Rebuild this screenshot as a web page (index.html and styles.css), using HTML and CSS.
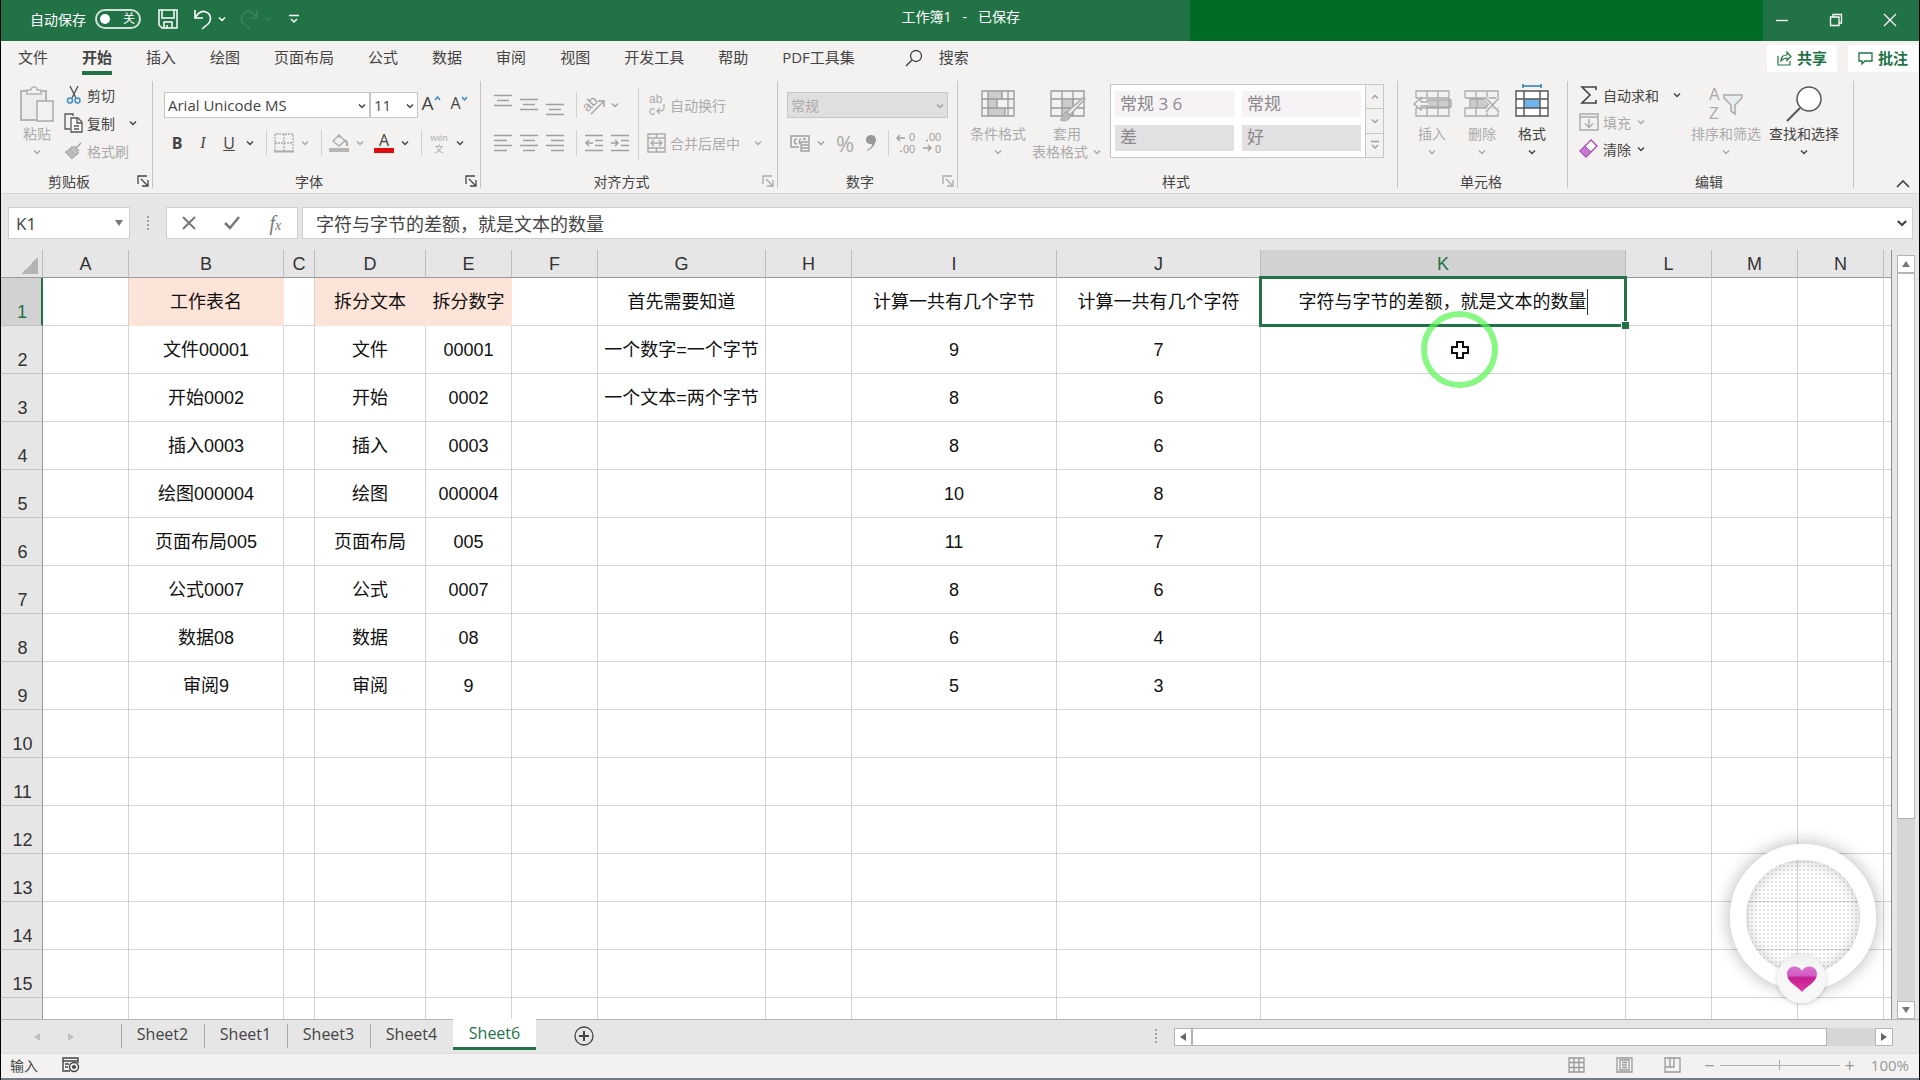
FILE: index.html
```html
<!DOCTYPE html>
<html lang="zh-CN">
<head>
    <meta charset="UTF-8">
    <title>工作簿1</title>
    <link rel="stylesheet" href="styles.css">
</head>
<body>
    <svg class="sprite" aria-hidden="true">
        <symbol id="chev" viewBox="0 0 10 10"><path d="M2 3.5l3 3 3-3" fill="none" stroke="currentColor" stroke-width="1.5"/></symbol>
        <symbol id="launcher" viewBox="0 0 12 12"><path d="M1 9V1h9M4 4l6 6M11 5v6H5" fill="none" stroke="currentColor" stroke-width="1.3"/></symbol>
        <symbol id="search" viewBox="0 0 18 18"><circle cx="11" cy="7" r="5.5" fill="none" stroke="currentColor" stroke-width="1.3"/><path d="M7 11l-6 6" stroke="currentColor" stroke-width="1.5"/></symbol>
    </svg>

    <header class="titlebar">
        <div class="title-left">
            <label class="autosave">自动保存
                <span class="switch"><input type="checkbox"><span>关</span></span>
            </label>
            <button class="quick save" aria-label="保存"><svg width="20" height="20" viewBox="0 0 20 20"><path d="M1 1h18v18H4l-3-3zM4 1v8h12V1M6 19v-6h8v6M9 19v-3" fill="none" stroke="currentColor" stroke-width="1.5"/></svg></button>
            <button class="quick" aria-label="撤消"><svg width="18" height="20" viewBox="0 0 18 20"><path d="M1 1v8h8M1 9c3-5 7-8 11-6 5 2 6 8 2 12l-6 5" fill="none" stroke="currentColor" stroke-width="1.6"/></svg></button>
            <button class="drop"><svg width="10" height="10"><use href="#chev"/></svg></button>
            <button class="quick redo" aria-label="恢复"><svg width="18" height="20" viewBox="0 0 18 20"><path d="M17 1v8H9M17 9c-3-5-7-8-11-6-5 2-6 8-2 12l6 5" fill="none" stroke="currentColor" stroke-width="1.6"/></svg></button>
            <button class="drop redo"><svg width="10" height="10"><use href="#chev"/></svg></button>
            <button class="drop more"><svg width="10" height="10" viewBox="0 0 10 10"><path d="M0 1.5h10M2 5l3 3 3-3" fill="none" stroke="currentColor" stroke-width="1.5"/></svg></button>
            <div class="doc-title"><span>工作簿1</span><span>-</span><span>已保存</span></div>
        </div>
        <div class="account"></div>
        <div class="window-buttons">
            <button aria-label="最小化"><svg width="14" height="14" viewBox="0 0 14 14"><path d="M1 7.5h12" stroke="currentColor" stroke-width="1.3"/></svg></button>
            <button aria-label="还原"><svg width="14" height="14" viewBox="0 0 14 14"><path d="M1.500 4h8.500v8.500H1.500zM4 4V1.500h8.500V10H10" fill="none" stroke="currentColor" stroke-width="1.3"/></svg></button>
            <button aria-label="关闭"><svg width="14" height="14" viewBox="0 0 14 14"><path d="M1 1l12 12M13 1L1 13" stroke="currentColor" stroke-width="1.3"/></svg></button>
        </div>
    </header>

    <nav class="tabs">
        <a href="#">文件</a>
        <a href="#" class="active">开始</a>
        <a href="#">插入</a>
        <a href="#">绘图</a>
        <a href="#">页面布局</a>
        <a href="#">公式</a>
        <a href="#">数据</a>
        <a href="#">审阅</a>
        <a href="#">视图</a>
        <a href="#">开发工具</a>
        <a href="#">帮助</a>
        <a href="#">PDF工具集</a>
        <a href="#" class="find"><svg width="18" height="18"><use href="#search"/></svg>搜索</a>
        <div class="tab-actions">
            <button><svg width="15" height="15" viewBox="0 0 15 15"><path d="M1 5v9h12v-4M4 10c0-4 2-6 6-6V1l4 4.500-4 4V7C7 7 5.500 8 4 10z" fill="none" stroke="currentColor" stroke-width="1.2"/></svg>共享</button>
            <button><svg width="15" height="15" viewBox="0 0 15 15"><path d="M1 2h13v8H7l-3 3v-3H1z" fill="none" stroke="currentColor" stroke-width="1.3"/></svg>批注</button>
        </div>
    </nav>

    <section class="ribbon">
        <div class="group">
            <div class="group-body clipboard">
                <button class="big off">
                    <svg width="34" height="36" viewBox="0 0 34 36"><path d="M1 5h25v29H1z" fill="#ededed" stroke="#b5b5b5" stroke-width="2"/><path d="M7 8V4h4c0-4 6-4 6 0h4v4z" fill="#f3f2f1" stroke="#b5b5b5" stroke-width="1.5"/><path d="M17 15h16v20H17z" fill="#f0f2f4" stroke="#aaa" stroke-width="1.5"/></svg>
                    <span>粘贴</span>
                    <svg class="chev" width="10" height="10"><use href="#chev"/></svg>
                </button>
                <div class="stack">
                    <button class="small"><svg width="19" height="20" viewBox="0 0 19 20"><path d="M6 1l6 12M14 1L8 13" stroke="#555" stroke-width="1.4"/><circle cx="6" cy="15.5" r="2.5" fill="none" stroke="#3c8dc9" stroke-width="1.5"/><circle cx="13.5" cy="15.5" r="2.5" fill="none" stroke="#3c8dc9" stroke-width="1.5"/></svg>剪切</button>
                    <button class="small"><svg width="19" height="20" viewBox="0 0 19 20"><path d="M6 16H1V1h8v2" fill="none" stroke="#555" stroke-width="1.3"/><path d="M7 5h7l4 4v10H7zM13 5v5h5M10 13h5M10 16h5" fill="#fff" stroke="#555" stroke-width="1.3"/></svg>复制<svg class="chev far" width="10" height="10"><use href="#chev"/></svg></button>
                    <button class="small off"><svg width="19" height="18" viewBox="0 0 19 18"><path d="M10 4l5 5M17 1l-5 5M8 5l6 6-2 2-6-6z" fill="#ddd" stroke="#aaa" stroke-width="1.7"/><path d="M6 7L1 10l7 7 4-4z" fill="#bbb" stroke="#aaa"/></svg>格式刷</button>
                </div>
            </div>
            <div class="group-label"><span>剪贴板</span><svg width="12" height="12"><use href="#launcher"/></svg></div>
        </div>

        <div class="group">
            <div class="group-body rows font">
                <div class="row">
                    <div class="pick font-name"><select aria-label="字体"><option>Arial Unicode MS</option></select><svg width="10" height="10"><use href="#chev"/></svg></div>
                    <div class="pick font-size"><select aria-label="字号"><option>11</option></select><svg width="10" height="10"><use href="#chev"/></svg></div>
                    <button class="tool grow">A<svg width="7" height="5" viewBox="0 0 7 5"><path d="M1 4l2.500-3L6 4" fill="none" stroke="#3c8dc9" stroke-width="1.5"/></svg></button>
                    <button class="tool shrink">A<svg width="7" height="5" viewBox="0 0 7 5"><path d="M1 1l2.500 3L6 1" fill="none" stroke="#3c8dc9" stroke-width="1.5"/></svg></button>
                </div>
                <div class="row">
                    <button class="tool"><b>B</b></button>
                    <button class="tool italic"><i>I</i></button>
                    <button class="tool"><u>U</u></button>
                    <button class="drop"><svg width="10" height="10"><use href="#chev"/></svg></button>
                    <span class="sep"></span>
                    <button class="tool off" aria-label="边框"><svg width="20" height="20" viewBox="0 0 20 20"><path d="M1 18V1h18v17M10 1v17M1 10h18" fill="none" stroke="currentColor" stroke-width="1.3" stroke-dasharray="2 1"/><path d="M0 18.5h20" stroke="currentColor" stroke-width="2"/></svg></button>
                    <button class="drop off"><svg width="10" height="10"><use href="#chev"/></svg></button>
                    <span class="sep"></span>
                    <button class="tool off" aria-label="填充颜色"><svg width="20" height="20" viewBox="0 0 20 20"><path d="M4 8l6-6 6 6-6 5zM10 5V1" fill="none" stroke="currentColor" stroke-width="1.4"/><path d="M16 7c3 2 2 5 2 6" fill="none" stroke="currentColor" stroke-width="2"/><path d="M0 15h20v4H0z" fill="#b5b5b5"/></svg></button>
                    <button class="drop off"><svg width="10" height="10"><use href="#chev"/></svg></button>
                    <button class="tool color push">A</button>
                    <button class="drop"><svg width="10" height="10"><use href="#chev"/></svg></button>
                    <span class="sep"></span>
                    <button class="tool off pinyin"><span>wén</span><span>文</span></button>
                    <button class="drop"><svg width="10" height="10"><use href="#chev"/></svg></button>
                </div>
            </div>
            <div class="group-label"><span>字体</span><svg width="12" height="12"><use href="#launcher"/></svg></div>
        </div>

        <div class="group off-all">
            <div class="group-body align">
                <div class="rows">
                    <div class="row">
                        <button class="tool" aria-label="顶端对齐"><svg width="18" height="22" viewBox="0 0 18 22"><path d="M0 1.5h18M3 6.5h12M0 11.5h18" stroke="currentColor" stroke-width="1.5"/></svg></button>
                        <button class="tool" aria-label="垂直居中"><svg width="18" height="22" viewBox="0 0 18 22"><path d="M0 5.5h18M3 10.5h12M0 15.5h18" stroke="currentColor" stroke-width="1.5"/></svg></button>
                        <button class="tool" aria-label="底端对齐"><svg width="18" height="22" viewBox="0 0 18 22"><path d="M0 10.5h18M3 15.5h12M0 20.5h18" stroke="currentColor" stroke-width="1.5"/></svg></button>
                        <span class="sep"></span>
                        <button class="tool tilt" aria-label="方向"><svg width="22" height="22" viewBox="0 0 22 22"><path d="M8 20L20 8M15 7h6v6" fill="none" stroke="currentColor" stroke-width="1.4"/><text x="-2" y="13" font-size="14" fill="currentColor" transform="rotate(-45 8 8)">ab</text></svg></button>
                        <button class="drop"><svg width="10" height="10"><use href="#chev"/></svg></button>
                    </div>
                    <div class="row">
                        <button class="tool" aria-label="左对齐"><svg width="18" height="18" viewBox="0 0 18 18"><path d="M0 1.5h18M0 6.5h13M0 11.5h18M0 16.5h13" stroke="currentColor" stroke-width="1.5"/></svg></button>
                        <button class="tool" aria-label="居中"><svg width="18" height="18" viewBox="0 0 18 18"><path d="M0 1.5h18M3 6.5h12M0 11.5h18M3 16.5h12" stroke="currentColor" stroke-width="1.5"/></svg></button>
                        <button class="tool" aria-label="右对齐"><svg width="18" height="18" viewBox="0 0 18 18"><path d="M0 1.5h18M5 6.5h13M0 11.5h18M5 16.5h13" stroke="currentColor" stroke-width="1.5"/></svg></button>
                        <span class="sep"></span>
                        <button class="tool" aria-label="减少缩进"><svg width="18" height="18" viewBox="0 0 18 18"><path d="M0 1.5h18M10 6.5h8M10 11.5h8M0 16.5h18M1 9h7M4 6L1 9l3 3" fill="none" stroke="currentColor" stroke-width="1.5"/></svg></button>
                        <button class="tool" aria-label="增加缩进"><svg width="18" height="18" viewBox="0 0 18 18"><path d="M0 1.5h18M10 6.5h8M10 11.5h8M0 16.5h18M0 9h7M4 6l3 3-3 3" fill="none" stroke="currentColor" stroke-width="1.5"/></svg></button>
                    </div>
                </div>
                <span class="sep tall"></span>
                <div class="rows">
                    <button class="small"><svg width="19" height="22" viewBox="0 0 19 22"><text x="2" y="9" font-size="12" fill="currentColor">ab</text><text x="2" y="21" font-size="12" fill="currentColor">c</text><path d="M17 10v4c0 3-2 3-7 3M13 14l-3 3 3 3" fill="none" stroke="currentColor" stroke-width="1.2"/></svg>自动换行</button>
                    <button class="small"><svg width="19" height="20" viewBox="0 0 19 20"><path d="M1 1h17v18H1zM1 5h17M1 15h17M9.500 1v4M9.500 15v4M4 10h11M7 7l-3 3 3 3M12 7l3 3-3 3" fill="none" stroke="currentColor" stroke-width="1.4"/></svg>合并后居中<svg class="chev far" width="10" height="10"><use href="#chev"/></svg></button>
                </div>
            </div>
            <div class="group-label"><span>对齐方式</span><svg width="12" height="12"><use href="#launcher"/></svg></div>
        </div>

        <div class="group off-all">
            <div class="group-body rows number">
                <div class="row">
                    <div class="pick format"><select aria-label="数字格式" disabled><option>常规</option></select><svg width="10" height="10"><use href="#chev"/></svg></div>
                </div>
                <div class="row">
                    <button class="tool" aria-label="会计数字格式"><svg width="20" height="20" viewBox="0 0 20 20"><path d="M9 14H1V3h18v5M7 6c-3-1-4 5 0 5M11 6c-2 0-2 4-1 5M13 6h3" fill="none" stroke="currentColor" stroke-width="1.5"/><path d="M11 9h8v9h-8zM11 12h8M11 15h8" fill="#f3f2f1" stroke="currentColor" stroke-width="1.3"/></svg></button>
                    <button class="drop"><svg width="10" height="10"><use href="#chev"/></svg></button>
                    <button class="tool percent push">%</button>
                    <button class="tool" aria-label="千位分隔样式"><svg width="12" height="16" viewBox="0 0 12 16"><path d="M2 15c4-2 5-4 5-6C-1 10-1 0 6 0c8 0 6 12-4 16z" fill="#999"/></svg></button>
                    <span class="sep tight"></span>
                    <button class="tool" aria-label="增加小数位数"><svg width="20" height="20" viewBox="0 0 20 20"><path d="M1 5h8M4 2L1 5l3 3M4 18.5h2" fill="none" stroke="currentColor" stroke-width="1.4"/><text x="13" y="8" font-size="11" fill="currentColor">0</text><text x="7" y="20" font-size="11" fill="currentColor">00</text></svg></button>
                    <button class="tool" aria-label="减少小数位数"><svg width="20" height="20" viewBox="0 0 20 20"><path d="M1 15h8M6 12l3 3-3 3M4 7.5h2" fill="none" stroke="currentColor" stroke-width="1.4"/><text x="7" y="8" font-size="11" fill="currentColor">00</text><text x="13" y="20" font-size="11" fill="currentColor">0</text></svg></button>
                </div>
            </div>
            <div class="group-label"><span>数字</span><svg width="12" height="12"><use href="#launcher"/></svg></div>
        </div>

        <div class="group">
            <div class="group-body styles">
                <button class="big off cond">
                    <svg width="34" height="36" viewBox="0 0 34 36"><path d="M7 5h14v8H7zM7 13h9v9H7zM7 22h17v8H7z" fill="#ccc"/><path d="M1 5h32v25H1zM1 13h32M1 22h32M7 5v25M27 5v25M21 5v8M16 13v9M24 22v8" fill="none" stroke="#999" stroke-width="1.3"/></svg>
                    <span>条件格式</span>
                    <svg class="chev" width="10" height="10"><use href="#chev"/></svg>
                </button>
                <button class="big off table">
                    <svg width="34" height="36" viewBox="0 0 34 36"><path d="M12 14h12v16H12z" fill="#ccc"/><path d="M1 5h33v25H1zM1 13h33M1 22h33M12 5v25M23 5v25" fill="none" stroke="#999" stroke-width="1.3"/><path d="M35 13L20 29l-3-3 16-14z" fill="#eee" stroke="#aaa" stroke-width="1.5"/><path d="M16 26c-4 1-3 6-6 8 5 2 10 1 10-5z" fill="#bbb" stroke="#aaa"/></svg>
                    <span>套用</span>
                    <span>表格格式<svg class="chev" width="10" height="10"><use href="#chev"/></svg></span>
                </button>
                <div class="gallery">
                    <div class="swatches">
                        <button>常规 3 6</button>
                        <button>常规</button>
                        <button class="dark">差</button>
                        <button class="dark">好</button>
                    </div>
                    <div class="gallery-nav">
                        <button aria-label="上"><svg width="10" height="10" viewBox="0 0 10 10"><path d="M2 6.5l3-3 3 3" fill="none" stroke="currentColor" stroke-width="1.5"/></svg></button>
                        <button aria-label="下"><svg width="10" height="10"><use href="#chev"/></svg></button>
                        <button aria-label="其他"><svg width="10" height="10" viewBox="0 0 10 10"><path d="M1 1.5h8M2 5l3 3 3-3" fill="none" stroke="currentColor" stroke-width="1.5"/></svg></button>
                    </div>
                </div>
            </div>
            <div class="group-label plain"><span>样式</span></div>
        </div>

        <div class="group">
            <div class="group-body cells">
                <button class="big off">
                    <svg width="40" height="36" viewBox="0 0 40 36"><path d="M14 14h25v7H14z" fill="#ccc"/><path d="M4 12V5h33v25H4v-8M4 12h33M4 22h33M15 5v7M26 5v7M15 22v8M26 22v8M15 14h24v7H15M26 14v7" fill="none" stroke="#aaa" stroke-width="1.3"/><path d="M16 16H9v-4l-7 6 7 6v-4h7" fill="#f3f2f1" stroke="#aaa" stroke-width="1.3"/></svg>
                    <span>插入</span>
                    <svg class="chev" width="10" height="10"><use href="#chev"/></svg>
                </button>
                <button class="big off">
                    <svg width="36" height="36" viewBox="0 0 36 36"><path d="M6 13h15l4 5-4 4H6z" fill="#ccc"/><path d="M1 12V5h33v7H1M1 22v8h33v-8zM12 5v7M23 5v7M12 22v8M23 22v8M6 13h15l4 5-4 4H6zM13 13v9" fill="none" stroke="#aaa" stroke-width="1.3"/><path d="M22 12l13 14M35 12L22 26" stroke="#f3f2f1" stroke-width="4"/><path d="M22 12l13 14M35 12L22 26" stroke="#aaa" stroke-width="1.3"/></svg>
                    <span>删除</span>
                    <svg class="chev" width="10" height="10"><use href="#chev"/></svg>
                </button>
                <button class="big">
                    <svg width="34" height="36" viewBox="0 0 34 36"><path d="M1 5h32v25H1z" fill="#fff"/><path d="M9 13h16v9H9z" fill="#6fb4e8"/><path d="M1 5h32v25H1zM1 13h32M1 22h32M9 5v25M25 5v25" fill="none" stroke="#555" stroke-width="1.4"/><path d="M8 0h18M8-2v4M26-2v4" stroke="#2a7fc0" stroke-width="1.5"/></svg>
                    <span>格式</span>
                    <svg class="chev" width="10" height="10"><use href="#chev"/></svg>
                </button>
            </div>
            <div class="group-label plain"><span>单元格</span></div>
        </div>

        <div class="group">
            <div class="group-body edit">
                <div class="stack">
                    <button class="small"><svg width="20" height="20" viewBox="0 0 20 20"><path d="M17 5V2H3l8 8-8 8h14v-3" fill="none" stroke="#444" stroke-width="1.6"/></svg>自动求和<svg class="chev far" width="10" height="10"><use href="#chev"/></svg></button>
                    <button class="small off"><svg width="20" height="18" viewBox="0 0 20 18"><path d="M1 1h18v16H1zM1 4h18M10 6v8M6 10.5l4 4 4-4" fill="none" stroke="#aaa" stroke-width="1.4"/></svg>填充<svg class="chev" width="10" height="10"><use href="#chev"/></svg></button>
                    <button class="small"><svg width="20" height="20" viewBox="0 0 20 20"><path d="M12 1l6 6L7 18l-6-6z" fill="#fff" stroke="#a84bb5" stroke-width="1.4"/><path d="M6 7l6 6-5 5-6-6z" fill="#c877d2" stroke="#a84bb5"/></svg>清除<svg class="chev" width="10" height="10"><use href="#chev"/></svg></button>
                </div>
                <button class="big off wide">
                    <svg width="36" height="36" viewBox="0 0 36 36"><text x="1" y="14" font-size="16" fill="currentColor">A</text><text x="1" y="33" font-size="16" fill="currentColor">Z</text><path d="M16 9h18v3l-7 7v9l-4-3v-6l-7-7z" fill="#e9edf0" stroke="#aaa" stroke-width="1.5"/></svg>
                    <span>排序和筛选</span>
                    <svg class="chev" width="10" height="10"><use href="#chev"/></svg>
                </button>
                <button class="big wide">
                    <svg width="36" height="36" viewBox="0 0 36 36"><circle cx="23" cy="13" r="12" fill="#fff" stroke="#555" stroke-width="1.5"/><path d="M14 22L1 35" stroke="#555" stroke-width="2"/></svg>
                    <span>查找和选择</span>
                    <svg class="chev" width="10" height="10"><use href="#chev"/></svg>
                </button>
            </div>
            <div class="group-label plain"><span>编辑</span></div>
        </div>
        <button class="collapse" aria-label="折叠功能区"><svg width="14" height="9" viewBox="0 0 14 9"><path d="M1 8l6-6 6 6" fill="none" stroke="currentColor" stroke-width="1.7"/></svg></button>
    </section>

    <section class="formula-bar">
        <div class="name-box"><input type="text" value="K1" aria-label="名称框"><span class="tri down"></span></div>
        <span class="dots"></span>
        <div class="formula-buttons">
            <button aria-label="取消"><svg width="14" height="14" viewBox="0 0 14 14"><path d="M1 1l12 12M13 1L1 13" stroke="currentColor" stroke-width="2"/></svg></button>
            <button aria-label="输入"><svg width="16" height="14" viewBox="0 0 16 14"><path d="M1 7l5 5 9-11" fill="none" stroke="currentColor" stroke-width="2.5"/></svg></button>
            <button class="fx"><i>f<small>x</small></i></button>
        </div>
        <div class="formula">
            <input type="text" value="字符与字节的差额，就是文本的数量" aria-label="编辑栏">
            <svg width="14" height="14"><use href="#chev"/></svg>
        </div>
    </section>

    <main class="sheet">
        <div class="grid">
            <table>
                <colgroup>
                    <col class="c-head"><col class="c-std"><col class="c-b"><col class="c-c"><col class="c-d"><col class="c-std"><col class="c-std"><col class="c-g"><col class="c-std"><col class="c-i"><col class="c-j"><col class="c-k"><col class="c-std"><col class="c-std"><col class="c-std"><col class="c-rest">
                </colgroup>
                <thead>
                    <tr><th class="corner"></th><th>A</th><th>B</th><th>C</th><th>D</th><th>E</th><th>F</th><th>G</th><th>H</th><th>I</th><th>J</th><th class="current">K</th><th>L</th><th>M</th><th>N</th><th></th></tr>
                </thead>
                <tbody>
                    <tr><th class="current">1</th><td></td><td class="fill">工作表名</td><td></td><td class="fill">拆分文本</td><td class="fill">拆分数字</td><td></td><td>首先需要知道</td><td></td><td>计算一共有几个字节</td><td>计算一共有几个字符</td><td class="selected"><span class="caret">字符与字节的差额，就是文本的数量</span></td><td></td><td></td><td></td><td></td></tr>
                    <tr><th>2</th><td></td><td>文件00001</td><td></td><td>文件</td><td>00001</td><td></td><td>一个数字=一个字节</td><td></td><td>9</td><td>7</td><td></td><td></td><td></td><td></td><td></td></tr>
                    <tr><th>3</th><td></td><td>开始0002</td><td></td><td>开始</td><td>0002</td><td></td><td>一个文本=两个字节</td><td></td><td>8</td><td>6</td><td></td><td></td><td></td><td></td><td></td></tr>
                    <tr><th>4</th><td></td><td>插入0003</td><td></td><td>插入</td><td>0003</td><td></td><td></td><td></td><td>8</td><td>6</td><td></td><td></td><td></td><td></td><td></td></tr>
                    <tr><th>5</th><td></td><td>绘图000004</td><td></td><td>绘图</td><td>000004</td><td></td><td></td><td></td><td>10</td><td>8</td><td></td><td></td><td></td><td></td><td></td></tr>
                    <tr><th>6</th><td></td><td>页面布局005</td><td></td><td>页面布局</td><td>005</td><td></td><td></td><td></td><td>11</td><td>7</td><td></td><td></td><td></td><td></td><td></td></tr>
                    <tr><th>7</th><td></td><td>公式0007</td><td></td><td>公式</td><td>0007</td><td></td><td></td><td></td><td>8</td><td>6</td><td></td><td></td><td></td><td></td><td></td></tr>
                    <tr><th>8</th><td></td><td>数据08</td><td></td><td>数据</td><td>08</td><td></td><td></td><td></td><td>6</td><td>4</td><td></td><td></td><td></td><td></td><td></td></tr>
                    <tr><th>9</th><td></td><td>审阅9</td><td></td><td>审阅</td><td>9</td><td></td><td></td><td></td><td>5</td><td>3</td><td></td><td></td><td></td><td></td><td></td></tr>
                    <tr><th>10</th><td></td><td></td><td></td><td></td><td></td><td></td><td></td><td></td><td></td><td></td><td></td><td></td><td></td><td></td><td></td></tr>
                    <tr><th>11</th><td></td><td></td><td></td><td></td><td></td><td></td><td></td><td></td><td></td><td></td><td></td><td></td><td></td><td></td><td></td></tr>
                    <tr><th>12</th><td></td><td></td><td></td><td></td><td></td><td></td><td></td><td></td><td></td><td></td><td></td><td></td><td></td><td></td><td></td></tr>
                    <tr><th>13</th><td></td><td></td><td></td><td></td><td></td><td></td><td></td><td></td><td></td><td></td><td></td><td></td><td></td><td></td><td></td></tr>
                    <tr><th>14</th><td></td><td></td><td></td><td></td><td></td><td></td><td></td><td></td><td></td><td></td><td></td><td></td><td></td><td></td><td></td></tr>
                    <tr><th>15</th><td></td><td></td><td></td><td></td><td></td><td></td><td></td><td></td><td></td><td></td><td></td><td></td><td></td><td></td><td></td></tr>
                    <tr><th></th><td></td><td></td><td></td><td></td><td></td><td></td><td></td><td></td><td></td><td></td><td></td><td></td><td></td><td></td><td></td></tr>
                </tbody>
            </table>
        </div>
        <div class="vscroll">
            <button aria-label="向上滚动"><span class="tri up"></span></button>
            <div class="track"><div class="thumb"></div></div>
            <button aria-label="向下滚动"><span class="tri down"></span></button>
        </div>
    </main>

    <footer class="sheet-tabs">
        <div class="tab-nav"><span class="tri left"></span><span class="tri right"></span></div>
        <button>Sheet2</button>
        <button>Sheet1</button>
        <button>Sheet3</button>
        <button>Sheet4</button>
        <button class="active">Sheet6</button>
        <button class="add" aria-label="新工作表"><svg width="20" height="20" viewBox="0 0 20 20"><circle cx="10" cy="10" r="9" fill="none" stroke="currentColor" stroke-width="1.3"/><path d="M10 5v10M5 10h10" stroke="currentColor" stroke-width="2"/></svg></button>
        <span class="dots"></span>
        <div class="hscroll">
            <button aria-label="向左滚动"><span class="tri left"></span></button>
            <div class="track"><div class="thumb"></div></div>
            <button aria-label="向右滚动"><span class="tri right"></span></button>
        </div>
    </footer>

    <div class="status">
        <span>输入</span>
        <svg width="18" height="16" viewBox="0 0 18 16"><path d="M8 14H1V1h15v5M1 4h15M3 7h4M3 10h3" fill="none" stroke="currentColor" stroke-width="1.4"/><circle cx="12" cy="10" r="4.5" fill="#f3f2f1" stroke="currentColor" stroke-width="1.4"/><circle cx="12" cy="10" r="2" fill="currentColor"/></svg>
        <div class="views">
            <button aria-label="普通"><svg width="18" height="16" viewBox="0 0 18 16"><path d="M1 1h15v14H1zM1 5.5h15M1 10.5h15M6 1v14M11 1v14" fill="none" stroke="currentColor" stroke-width="1.3"/></svg></button>
            <button aria-label="页面布局"><svg width="18" height="16" viewBox="0 0 18 16"><path d="M1 1h15v14H1zM4 3h9v10H4zM6 5.5h5M6 8h5M6 10.5h5" fill="none" stroke="currentColor" stroke-width="1.3"/></svg></button>
            <button aria-label="分页预览"><svg width="18" height="16" viewBox="0 0 18 16"><path d="M1 1h15v14H1zM1 10h9V1M6 1v9" fill="none" stroke="currentColor" stroke-width="1.3"/></svg></button>
        </div>
        <div class="zoom">
            <span>−</span>
            <input type="range" min="0" max="100" value="50" aria-label="缩放">
            <span>+</span>
        </div>
        <span class="percent-label">100%</span>
    </div>

    <div class="pointer"><svg width="20" height="20" viewBox="0 0 20 20"><path d="M7 2h6v5h5v6h-5v5H7v-5H2V7h5z" fill="#fff" stroke="#111" stroke-width="2"/></svg></div>
    <div class="dial">
        <div class="dial-face"></div>
        <div class="badge"><svg width="30" height="26" viewBox="0 0 30 26"><defs><linearGradient id="pink" x1="0" y1="0" x2="0" y2="1"><stop offset="0" stop-color="#d873cc"/><stop offset=".35" stop-color="#d25cc4"/><stop offset=".45" stop-color="#c41d90"/><stop offset="1" stop-color="#de3da5"/></linearGradient></defs><path d="M15 26C10 20 0 16 0 8c0-9 12-10 15-3 3-7 15-6 15 3 0 8-10 12-15 18z" fill="url(#pink)"/></svg></div>
    </div>
</body>
</html>
```
FILE: styles.css
```css
* {
    box-sizing: border-box;
    margin: 0;
    padding: 0;
}

body {
    height: 100vh;
    display: flex;
    flex-direction: column;
    overflow: hidden;
    position: relative;
    background: #e6e6e6;
    border: 0 solid #000;
    border-width: 0 1px;
    font-family: "Open Sans", "Noto Sans CJK SC", sans-serif;
    font-size: 14px;
    color: #444;
}

button, input, select {
    font: inherit;
    color: inherit;
    background: none;
    border: none;
}

button {
    display: flex;
    align-items: center;
    justify-content: center;
    white-space: nowrap;
}

a {
    color: inherit;
    text-decoration: none;
}

svg {
    flex: none;
    overflow: visible;
}

svg text {
    font-family: "Liberation Sans", sans-serif;
}

.sprite {
    position: absolute;
    width: 0;
    height: 0;
}

/* title bar */
.titlebar {
    display: grid;
    grid-template-columns: 1fr 573px 156px;
    height: 41px;
    flex: none;
    background: #217346;
    color: #fff;
}

.title-left {
    display: flex;
    align-items: center;
    padding: 0 170px 4px 29px;
}

.autosave {
    display: flex;
    align-items: center;
    gap: 9px;
}

.switch {
    position: relative;
    width: 46px;
    height: 20px;
}

.switch input {
    appearance: none;
    display: block;
    width: 46px;
    height: 20px;
    border: 2px solid #d3e3da;
    border-radius: 10px;
}

.switch input::before {
    content: "";
    display: block;
    width: 10px;
    height: 10px;
    margin: 3px;
    border-radius: 5px;
    background: #fff;
}

.switch span {
    position: absolute;
    right: 6px;
    top: 0;
    font-size: 12px;
    line-height: 20px;
}

.quick {
    width: 22px;
    height: 24px;
}

.save {
    margin: 0 13px 0 16px;
}

.drop {
    width: 16px;
    height: 26px;
}

.quick.redo {
    margin-left: 8px;
}

.redo {
    color: #3a8259;
}

.more {
    margin-left: 10px;
}

.doc-title {
    display: flex;
    gap: 11px;
    margin-left: auto;
    line-height: 30px;
    padding-bottom: 4px;
    white-space: nowrap;
}

.account {
    height: 42px;
    background: #006b25;
}

.window-buttons {
    display: flex;
    justify-content: space-between;
    padding: 0 22px 3px 12px;
}

/* ribbon tabs */
.tabs {
    display: flex;
    align-items: flex-start;
    gap: 34px;
    flex: none;
    height: 40px;
    padding: 4px 1px 0 17px;
    background: #f3f2f1;
    font-size: 15px;
    line-height: 25px;
    white-space: nowrap;
}

.tabs a.active {
    font-weight: bold;
    height: 30px;
    border-bottom: 4px solid #217346;
}

.find {
    display: flex;
    align-items: center;
    gap: 16px;
    margin-left: 16px;
}

.tab-actions {
    display: flex;
    gap: 11px;
    margin-left: auto;
}

.tab-actions button {
    width: 70px;
    height: 27px;
    gap: 5px;
    background: #fff;
    border-radius: 2px;
    font-weight: bold;
    color: #217346;
}

/* ribbon */
.ribbon {
    display: flex;
    flex: none;
    height: 113px;
    padding-bottom: 5px;
    background: #f3f2f1;
    border-bottom: 1px solid #d2d2d2;
}

.group {
    display: flex;
    flex-direction: column;
    border-right: 1px solid #c4c4c4;
}

.group-body {
    display: flex;
    flex: 1;
}

.group-label {
    display: flex;
    align-items: center;
    height: 14px;
    line-height: 16px;
    padding-right: 3px;
}

.group-label span {
    flex: 1;
    height: 14px;
    text-align: center;
}

.off, .off-all .group-body, .off-all .group-label svg {
    color: #ababab;
}

.off-all .group-body .row svg {
    color: #a0a0a0;
}

.big {
    flex-direction: column;
    justify-content: flex-start;
    width: 50px;
    height: 84px;
    padding-top: 5px;
    line-height: 18px;
}

.big > svg:first-child {
    margin-bottom: 3px;
}

.big > .chev {
    margin-top: 4px;
}

.stack {
    display: flex;
    flex-direction: column;
    align-items: flex-start;
}

.small {
    height: 28px;
    gap: 4px;
}

.small .chev {
    margin: 0 3px 0 1px;
}

.small .far {
    margin-left: 9px;
}

.clipboard {
    width: 151px;
    padding-left: 9px;
}

.clipboard .big {
    width: 54px;
}

.rows {
    display: flex;
    flex-direction: column;
    gap: 12px;
    padding-top: 11px;
}

.row {
    display: flex;
    align-items: center;
    height: 26px;
}

.rows .small {
    height: 26px;
    justify-content: flex-start;
}

.font {
    width: 327px;
    padding-left: 11px;
}

.pick {
    position: relative;
    height: 26px;
}

.pick select {
    appearance: none;
    display: block;
    width: 100%;
    height: 26px;
    padding: 0 3px;
    background: #fff;
    border: 1px solid #c6c6c6;
    font-size: 15px;
    opacity: 1;
}

.pick svg {
    position: absolute;
    right: 3px;
    top: 9px;
}

.font-name {
    width: 206px;
}

.font-size {
    width: 48px;
}

.tool {
    width: 26px;
    height: 26px;
    font-size: 16px;
}

.grow, .shrink {
    align-items: flex-start;
    line-height: 22px;
    font-size: 19px;
}

.grow svg, .shrink svg {
    margin-top: 4px;
}

.shrink {
    font-size: 16px;
    margin-left: 2px;
}

.italic {
    font-family: "Liberation Serif", serif;
}

.sep {
    width: 1px;
    height: 26px;
    margin: 0 4px 0 8px;
    background: #d0d0d0;
}

.sep.tight {
    margin-left: 4px;
}

.sep.tall {
    height: 72px;
    margin: 7px 8px 0 5px;
}

.push {
    margin-left: 3px;
}

.color {
    position: relative;
    height: 20px;
    line-height: 14px;
    padding-bottom: 6px;
}

.color::after {
    content: "";
    position: absolute;
    left: 3px;
    bottom: 0;
    width: 20px;
    height: 5px;
    background: #e00b0b;
}

.pinyin {
    flex-direction: column;
    font-size: 9px;
    line-height: 11px;
}

.align {
    width: 296px;
    padding-left: 9px;
}

.align .rows:first-child {
    width: 143px;
}

.number {
    width: 179px;
    padding-left: 9px;
}

.format {
    width: 161px;
}

.format select {
    background: #e1dfdd;
    font-size: 14px;
    border-color: #c8c6c4;
}

.percent {
    font-size: 22px;
}

.styles {
    width: 439px;
    padding-left: 9px;
}

.cond {
    width: 62px;
}

.table {
    width: 76px;
}

.table span svg {
    margin-left: 4px;
}

.gallery {
    display: flex;
    width: 274px;
    height: 74px;
    margin: 3px 0 0 5px;
    background: #fff;
    border: 1px solid #c6c6c6;
}

.swatches {
    flex: 1;
    display: grid;
    grid-template-columns: 1fr 1fr;
    grid-template-rows: 26px 26px;
    gap: 8px;
    padding: 6px 4px;
}

.swatches button {
    justify-content: flex-start;
    padding-left: 5px;
    font-size: 17px;
    line-height: 24px;
    color: #8a8a8a;
    background: #f6f2f6;
}

.swatches .dark {
    align-items: flex-start;
    background: #e2e0e3;
}

.gallery-nav {
    display: flex;
    flex-direction: column;
    width: 18px;
    background: #f3f2f1;
    border-left: 1px solid #c6c6c6;
    color: #a0a0a0;
}

.gallery-nav button {
    flex: 1;
}

.gallery-nav button + button {
    border-top: 1px solid #c6c6c6;
}

.cells {
    width: 169px;
    padding-left: 9px;
}

.edit {
    width: 285px;
    padding-left: 11px;
}

.edit .stack {
    width: 108px;
}

.edit .small {
    height: 27px;
}

.big.wide {
    width: 78px;
}

.collapse {
    margin: auto 9px 0 auto;
}

/* formula bar */
.formula-bar {
    display: flex;
    flex: none;
    height: 56px;
    padding: 13px 6px 11px 7px;
}

.name-box, .formula-buttons, .formula {
    display: flex;
    align-items: center;
    background: #fff;
    border: 1px solid #cfcfcf;
}

.name-box {
    width: 122px;
    padding: 0 7px;
}

.name-box input {
    width: 99px;
    font-size: 17px;
}

.dots {
    width: 2px;
    height: 14px;
    margin: 9px 17px;
    border-left: 2px dotted #a0a0a0;
}

.formula-buttons {
    width: 132px;
    margin-right: 4px;
}

.formula-buttons button {
    flex: 1;
    color: #777;
}

.formula-buttons .fx {
    font: 20px "Liberation Serif", serif;
}

.fx small {
    font-size: 14px;
}

.formula {
    flex: 1;
    padding: 0 3px 0 13px;
}

.formula input {
    flex: 1;
    font-family: "Liberation Sans", "Noto Sans CJK SC", sans-serif;
    font-size: 18px;
}

.tri {
    border: 4px solid transparent;
}

.tri.down {
    border-top: 6px solid #777;
    border-bottom: 0;
}

.tri.up {
    border-bottom: 6px solid #777;
    border-top: 0;
}

.tri.left {
    border-right: 6px solid #666;
    border-left: 0;
}

.tri.right {
    border-left: 6px solid #666;
    border-right: 0;
}

/* cells */
.sheet {
    display: flex;
    flex: 1;
    min-height: 0;
}

.grid {
    flex: 1;
    overflow: hidden;
    border-right: 1px solid #8f8f8f;
}

table {
    width: 1891px;
    table-layout: fixed;
    border-spacing: 0;
    font-family: "Liberation Sans", "Noto Sans CJK SC", sans-serif;
    font-size: 18px;
    line-height: 26px;
    color: #111;
}

.c-head { width: 42px; }
.c-std { width: 86px; }
.c-b { width: 155px; }
.c-c { width: 31px; }
.c-d { width: 111px; }
.c-g { width: 168px; }
.c-i { width: 205px; }
.c-j { width: 204px; }
.c-k { width: 365px; }
.c-rest { width: 8px; }

th {
    font-weight: normal;
    background: #e6e6e6;
    color: #333;
}

thead th {
    height: 28px;
    padding-top: 1px;
    border-right: 1px solid #bdbdbd;
    border-bottom: 1px solid #999;
}

thead th:last-child {
    border-right: none;
}

.corner {
    background: linear-gradient(135deg, transparent 50%, #b4b4b4 50%) 20px 7px / 17px 17px no-repeat #e6e6e6;
}

tbody th {
    height: 48px;
    padding-left: 2px;
    vertical-align: bottom;
    border-right: 1px solid #999;
    border-bottom: 1px solid #c4c4c4;
}

th.current {
    background: #d2d2d2;
    color: #217346;
}

tbody th.current {
    border-right: 2px solid #217346;
}

td {
    height: 48px;
    text-align: center;
    white-space: nowrap;
    background: #fff;
    border-right: 1px solid #d4d4d4;
    border-bottom: 1px solid #d4d4d4;
}

td.fill {
    background: #fde4d8;
    border-color: #fde4d8;
}

.selected {
    position: relative;
}

.selected::before {
    content: "";
    position: absolute;
    inset: -2px;
    border: 3px solid #217346;
}

.selected::after {
    content: "";
    position: absolute;
    right: -4px;
    bottom: -4px;
    width: 7px;
    height: 7px;
    background: #217346;
    border: 1px solid #fff;
    border-width: 1px 0 0 1px;
}

.caret {
    padding: 3px 0;
    border-right: 1px solid #333;
}

/* scroll bars */
.vscroll {
    display: flex;
    flex-direction: column;
    width: 27px;
    padding: 5px 4px 0 5px;
}

.vscroll button, .hscroll button {
    flex: none;
    width: 18px;
    height: 18px;
    background: #fff;
    border: 1px solid #b4b4b4;
}

.track {
    flex: 1;
    background: #d6d6d6;
}

.thumb {
    background: #fff;
    border: 1px solid #b4b4b4;
}

.vscroll .thumb {
    height: 75%;
}

.hscroll .thumb {
    width: 93%;
    height: 18px;
}

/* sheet tabs */
.sheet-tabs {
    display: flex;
    flex: none;
    height: 34px;
    padding-right: 26px;
    border-top: 1px solid #b4b4b4;
    font-size: 16px;
}

.tab-nav {
    display: flex;
    align-items: center;
    gap: 28px;
    width: 120px;
    padding-left: 33px;
    opacity: .3;
}

.sheet-tabs > button {
    position: relative;
    width: 83px;
    height: 30px;
    padding-bottom: 3px;
}

.sheet-tabs > button::before {
    content: "";
    position: absolute;
    left: 0;
    top: 4px;
    width: 1px;
    height: 24px;
    background: #aaa;
}

.sheet-tabs > .active {
    height: 31px;
    margin-top: -1px;
    padding-bottom: 0;
    background: #fff;
    color: #217346;
    border-bottom: 3px solid #217346;
}

.sheet-tabs > .add {
    width: 96px;
    padding: 2px 0 0;
}

.sheet-tabs > .add::before, .sheet-tabs > .active::before {
    display: none;
}

.sheet-tabs .dots {
    margin-left: auto;
}

.hscroll {
    display: flex;
    width: 38%;
    padding-top: 8px;
}

.hscroll .track {
    height: 18px;
}

/* status bar */
.status {
    display: flex;
    align-items: center;
    flex: none;
    height: 27px;
    padding: 0 10px 2px 9px;
    gap: 24px;
    background: #f3f2f1;
    border-top: 1px solid #dcdcdc;
    border-bottom: 2px solid #747b83;
}

.views {
    display: flex;
    gap: 30px;
    margin-left: auto;
    color: #999;
}

.zoom {
    display: flex;
    align-items: center;
    gap: 5px;
    margin-left: -2px;
    font-size: 18px;
    line-height: 20px;
    color: #999;
}

.zoom input {
    appearance: none;
    width: 120px;
    height: 10px;
    background: linear-gradient(#b4b4b4, #b4b4b4) 0 5px / 120px 1px no-repeat;
}

.zoom input::-webkit-slider-thumb {
    appearance: none;
    width: 1px;
    height: 10px;
    background: #aaa;
}

.percent-label {
    margin-left: -8px;
    font-size: 15px;
    color: #999;
}

/* mouse highlight and recorder dial float over the cells */
.pointer {
    position: absolute;
    left: 1420px;
    top: 311px;
    display: flex;
    align-items: center;
    justify-content: center;
    width: 77px;
    height: 77px;
    border: 6px solid rgba(84, 245, 80, .7);
    border-radius: 50%;
}

.dial {
    position: absolute;
    right: 43px;
    bottom: 90px;
    width: 146px;
    height: 146px;
    border: 16px solid #fff;
    border-radius: 50%;
    box-shadow: 0 0 18px rgba(0, 0, 0, .3);
}

.dial-face {
    height: 114px;
    border-radius: 50%;
    background: radial-gradient(circle, rgba(150, 150, 150, .25) 1px, transparent 1px) 0 0 / 4px 4px;
    box-shadow: inset 0 0 14px rgba(0, 0, 0, .22);
}

.badge {
    position: absolute;
    left: 31px;
    bottom: -29px;
    display: flex;
    align-items: center;
    justify-content: center;
    width: 49px;
    height: 49px;
    border-radius: 50%;
    background: linear-gradient(#eee, #f7f7f7 30%);
    box-shadow: 0 1px 4px rgba(0, 0, 0, .2);
}
```
